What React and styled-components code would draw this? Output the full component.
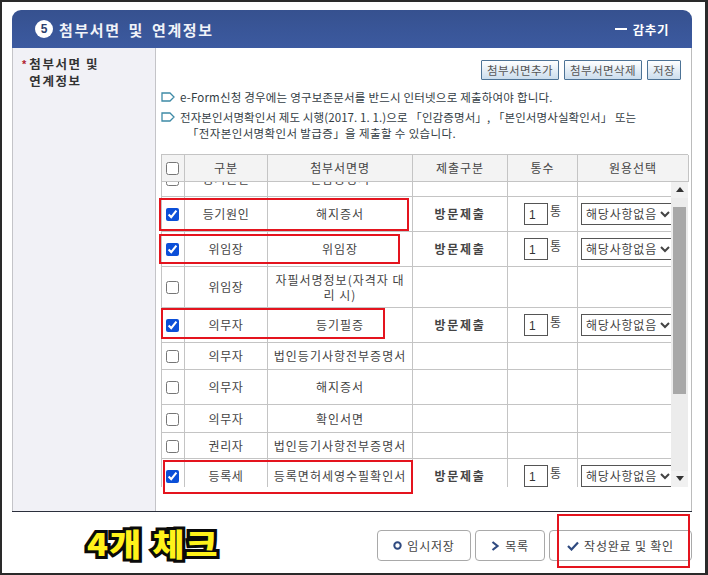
import React from "react";
import styled, { createGlobalStyle } from "styled-components";

const Global = createGlobalStyle`
  html, body { margin: 0; padding: 0; background: #fff; }
  body { font-family: "Noto Sans CJK KR", "Liberation Sans", sans-serif; color: #444; font-size: 12px; }
  * { box-sizing: border-box; }
`;

const Frame = styled.div`
  position: relative;
  width: 708px;
  height: 575px;
  border: 2px solid #2a2a2a;
  border-right-width: 3px;
  padding: 8px 0 0 10px;
  overflow: hidden;
  background: #fff;
`;
const Panel = styled.section`
  width: 680px;
  height: 502px;
  display: flex;
  flex-direction: column;
  border-bottom: 1px solid #2b2f3c;
`;
const Head = styled.header`
  height: 38px;
  flex: none;
  display: flex;
  align-items: center;
  justify-content: space-between;
  padding: 0 23px 0 23px;
  border-radius: 9px 9px 0 0;
  background: linear-gradient(#36518f, #3c5aa0);
  color: #fff;
`;
const HeadTitle = styled.h2`
  margin: 0;
  display: flex;
  align-items: center;
  gap: 6px;
  font-size: 15px;
  font-weight: 700;
  letter-spacing: 1.6px;
  word-spacing: 3px;
  color: #f1f3f8;
`;
const Num = styled.span`
  width: 18px;
  height: 18px;
  border-radius: 50%;
  background: #fff;
  color: #2d3f6d;
  font: 700 12px "Liberation Sans", sans-serif;
  letter-spacing: 0;
  display: flex;
  align-items: center;
  justify-content: center;
`;
const Toggle = styled.span`
  display: flex;
  align-items: center;
  gap: 6px;
  font-size: 12.5px;
  font-weight: 700;
  letter-spacing: 0.6px;
  &::before { content: ""; width: 12px; height: 2px; background: #fff; }
`;
const Body = styled.div`
  flex: 1;
  min-height: 0;
  display: flex;
  border-right: 1px solid #bcbcbc;
`;
const Side = styled.aside`
  width: 144px;
  flex: none;
  display: flex;
  gap: 3px;
  padding: 7px 0 0 9px;
  background: #f1f1f6;
  border-left: 1px solid #c4c4c8;
  border-right: 1px solid #c4c4c8;
`;
const Star = styled.span`
  color: #b01c2e;
  font: 700 11px "Liberation Sans", sans-serif;
  line-height: 18px;
`;
const SideLabel = styled.div`
  font-size: 12.5px;
  font-weight: 700;
  line-height: 17px;
  letter-spacing: 1.6px;
  color: #333;
  width: 86px;
`;
const Main = styled.main`
  flex: 1;
  min-width: 0;
  padding: 12px 0 0 5px;
`;
const ToolRow = styled.div`
  display: flex;
  justify-content: flex-end;
  gap: 5px;
  padding-right: 10px;
  height: 20px;
`;
const ToolBtn = styled.button`
  height: 20px;
  width: ${(p) => p.$w}px;
  padding: 0;
  border: 1px solid #4d7396;
  border-radius: 1px;
  background: linear-gradient(#ffffff, #cbdded);
  color: #555;
  font: 400 11.5px "Noto Sans CJK KR", sans-serif;
  letter-spacing: 0.4px;
`;
const Notes = styled.div`
  margin-top: 9px;
  display: flex;
  flex-direction: column;
  color: #333d44;
  font-size: 11.5px;
  line-height: 16px;
  height: 56px;
`;
const Note = styled.div`
  display: flex;
  gap: 5px;
  align-items: flex-start;
  margin-top: ${(p) => p.$top || 0}px;
  white-space: nowrap;
  letter-spacing: ${(p) => p.$ls}px;
  svg { flex: none; margin-top: 3px; }
`;
const NoteIndent = styled.span`
  width: ${(p) => p.$w}px;
  flex: none;
`;
const Tag = () => (
  <svg width="14" height="10" viewBox="0 0 14 10">
    <path d="M1 1h8l4 4-4 4H1z" fill="#fff" stroke="#3e8aa6" strokeWidth="1.3" />
  </svg>
);
const Grid = styled.div`
  width: 527px;
  margin-top: 9px;
  border-top: 1px solid #c4c4c4;
  border-left: 1px solid #c4c4c4;
`;
const Tbl = styled.table`
  border-collapse: collapse;
  table-layout: fixed;
  width: 527px;
  margin-left: -1px;
`;
const Th = styled.th`
  height: 26px;
  padding: 0;
  background: #f3f3f3;
  border: 1px solid #c4c4c4;
  border-top: 0;
  font-weight: 400;
  font-size: 12px;
  letter-spacing: 0.9px;
  color: #444;
`;
const CheckTh = styled(Th)`
  padding-right: 2px;
`;
const Td = styled.td`
  padding: 0 2px;
  border: 1px solid #c4c4c4;
  text-align: center;
  font-size: 12px;
  line-height: 15px;
  letter-spacing: ${(p) => p.$ls ?? 0.2}px;
  color: #444;
  background: #fff;
`;
const CheckTd = styled(Td)`
  padding: 0 2px 0 0;
`;
const Strong = styled(Td)`
  font-weight: 700;
  letter-spacing: 1.7px;
`;
const Tr = styled.tr`
  height: ${(p) => p.$h}px;
`;
const BodyWrap = styled.div`
  display: flex;
  height: 305px;
`;
const Clip = styled.div`
  width: 510px;
  height: 305px;
  overflow: hidden;
`;
const Scrolled = styled(Tbl)`
  margin-top: -21px;
`;
const Check = styled.input.attrs({ type: "checkbox" })`
  width: 13px;
  height: 13px;
  display: block;
  margin: 2px auto 0;
  accent-color: #0b4fd8;
`;
const Count = styled.div`
  display: flex;
  align-items: flex-start;
  justify-content: center;
  gap: 2px;
`;
const CountInput = styled.input`
  width: 24px;
  height: 22px;
  border: 1px solid #555;
  padding: 2px 0 0 4px;
  font: 400 12px "Liberation Sans", sans-serif;
  color: #333;
`;
const Unit = styled.span`
  font-size: 12px;
  line-height: 16px;
`;
const Select = styled.select`
  display: block;
  width: 93px;
  height: 22px;
  margin-left: 1px;
  padding: 0;
  background: #fff;
  border: 1px solid #555;
  border-radius: 0;
  color: #444;
  font: 400 12px "Noto Sans CJK KR", sans-serif;
  letter-spacing: 0.8px;
`;
const Bar = styled.div`
  width: 17px;
  height: 305px;
  flex: none;
  display: flex;
  flex-direction: column;
  background: #ececec;
`;
const BarBtn = styled.div`
  height: 16px;
  flex: none;
  display: flex;
  align-items: center;
  justify-content: center;
  background: #f1f1f1;
  margin-top: ${(p) => (p.$end ? "auto" : "0")};
`;
const Thumb = styled.div`
  width: 13px;
  height: 187px;
  flex: none;
  margin: 9px 0 0 2px;
  background: #a8a8a8;
`;
const Foot = styled.footer`
  display: flex;
  align-items: flex-start;
  padding-top: 18px;
  height: 60px;
`;
const Badge = styled.div`
  margin: -4px 0 0 75px;
  width: 290px;
  font-size: 31px;
  line-height: 34px;
  font-weight: 900;
  letter-spacing: 1px;
  word-spacing: 1px;
  color: #fff21a;
  -webkit-text-stroke: 6px #0a0a0a;
  paint-order: stroke fill;
  text-shadow: 1px 2px 0 #0a0a0a;
  white-space: nowrap;
  transform: scaleX(1.12);
  transform-origin: left center;
`;
const Actions = styled.div`
  display: flex;
  gap: 4px;
`;
const ActBtn = styled.button`
  height: 31px;
  width: ${(p) => p.$w}px;
  padding: 0;
  display: flex;
  align-items: center;
  justify-content: center;
  gap: 5px;
  background: #fff;
  border: 1px solid #a9a9a9;
  border-radius: 4px;
  color: #444;
  font: 400 12px "Noto Sans CJK KR", sans-serif;
  letter-spacing: 0.8px;
`;
const Mark = styled.div`
  position: absolute;
  left: ${(p) => p.$x - 2}px;
  top: ${(p) => p.$y - 2}px;
  width: ${(p) => p.$w}px;
  height: ${(p) => p.$h}px;
  border: 2px solid #e4141e;
  pointer-events: none;
`;

const Cols = () => (
  <colgroup>
    <col width="23" />
    <col width="83" />
    <col width="145" />
    <col width="95" />
    <col width="70" />
    <col width="111" />
  </colgroup>
);

const rows = [
  [35, false, "등기원인", "인감증명서", false],
  [35, true, "등기원인", "해지증서", true],
  [35, true, "위임장", "위임장", true],
  [41, false, "위임장", "자필서명정보(자격자 대리 시)", false],
  [35, true, "의무자", "등기필증", true],
  [27, false, "의무자", "법인등기사항전부증명서", false],
  [35, false, "의무자", "해지증서", false],
  [28, false, "의무자", "확인서면", false],
  [26, false, "권리자", "법인등기사항전부증명서", false],
  [35, true, "등록세", "등록면허세영수필확인서", true],
];

const marks = [
  [159, 198, 250, 33],
  [159, 234, 241, 30],
  [161, 308, 224, 31],
  [163, 460, 250, 34],
  [557, 514, 133, 54],
];

export default function App() {
  return (
    <Frame>
      <Global />
      <Panel>
        <Head>
          <HeadTitle><Num>5</Num>첨부서면 및 연계정보</HeadTitle>
          <Toggle>감추기</Toggle>
        </Head>
        <Body>
          <Side>
            <Star>*</Star>
            <SideLabel>첨부서면 및 연계정보</SideLabel>
          </Side>
          <Main>
            <ToolRow>
              <ToolBtn $w={78}>첨부서면추가</ToolBtn>
              <ToolBtn $w={78}>첨부서면삭제</ToolBtn>
              <ToolBtn $w={34}>저장</ToolBtn>
            </ToolRow>
            <Notes>
              <Note $ls={0.2}><Tag />e-Form신청 경우에는 영구보존문서를 반드시 인터넷으로 제출하여야 합니다.</Note>
              <Note $top={4} $ls={0.1}><Tag />전자본인서명확인서 제도 시행(2017. 1. 1.)으로 「인감증명서」, 「본인서명사실확인서」 또는</Note>
              <Note $ls={0.37}><NoteIndent $w={21} />「전자본인서명확인서 발급증」을 제출할 수 있습니다.</Note>
            </Notes>
            <Grid>
              <Tbl>
                <Cols />
                <thead>
                  <tr>
                    <CheckTh><Check /></CheckTh>
                    <Th>구분</Th>
                    <Th>첨부서면명</Th>
                    <Th>제출구분</Th>
                    <Th>통수</Th>
                    <Th>원용선택</Th>
                  </tr>
                </thead>
              </Tbl>
              <BodyWrap>
                <Clip>
                  <Scrolled>
                    <Cols />
                    <tbody>
                      {rows.map(([h, on, a, b, full], i) => (
                        <Tr $h={h} key={i}>
                          <CheckTd><Check defaultChecked={on} /></CheckTd>
                          <Td $ls={0.6}>{a}</Td>
                          <Td $ls={1}>{b}</Td>
                          {full ? <Strong>방문제출</Strong> : <Td />}
                          <Td>
                            {full && (
                              <Count>
                                <CountInput defaultValue="1" />
                                <Unit>통</Unit>
                              </Count>
                            )}
                          </Td>
                          <Td>
                            {full && (
                              <Select defaultValue="n">
                                <option value="n">해당사항없음</option>
                              </Select>
                            )}
                          </Td>
                        </Tr>
                      ))}
                    </tbody>
                  </Scrolled>
                </Clip>
                <Bar>
                  <BarBtn>
                    <svg width="8" height="5" viewBox="0 0 8 5"><path d="M4 0l4 5H0z" fill="#333" /></svg>
                  </BarBtn>
                  <Thumb />
                  <BarBtn $end>
                    <svg width="8" height="5" viewBox="0 0 8 5"><path d="M0 0h8L4 5z" fill="#333" /></svg>
                  </BarBtn>
                </Bar>
              </BodyWrap>
            </Grid>
          </Main>
        </Body>
      </Panel>
      <Foot>
        <Badge>4개 체크</Badge>
        <Actions>
          <ActBtn $w={94}>
            <svg width="9" height="9" viewBox="0 0 9 9"><circle cx="4.5" cy="4.5" r="3.2" fill="none" stroke="#2f4a80" strokeWidth="2" /></svg>
            임시저장
          </ActBtn>
          <ActBtn $w={70}>
            <svg width="9" height="10" viewBox="0 0 9 10"><path d="M1.5 1l5 4-5 4" fill="none" stroke="#2f4a80" strokeWidth="2.2" /></svg>
            목록
          </ActBtn>
          <ActBtn $w={143}>
            <svg width="12" height="10" viewBox="0 0 12 10"><path d="M1 5l3.5 3.5L11 1.5" fill="none" stroke="#2f4a80" strokeWidth="2.2" /></svg>
            작성완료 및 확인
          </ActBtn>
        </Actions>
      </Foot>
      {marks.map(([x, y, w, h]) => (
        <Mark key={`${x}-${y}`} $x={x} $y={y} $w={w} $h={h} />
      ))}
    </Frame>
  );
}
